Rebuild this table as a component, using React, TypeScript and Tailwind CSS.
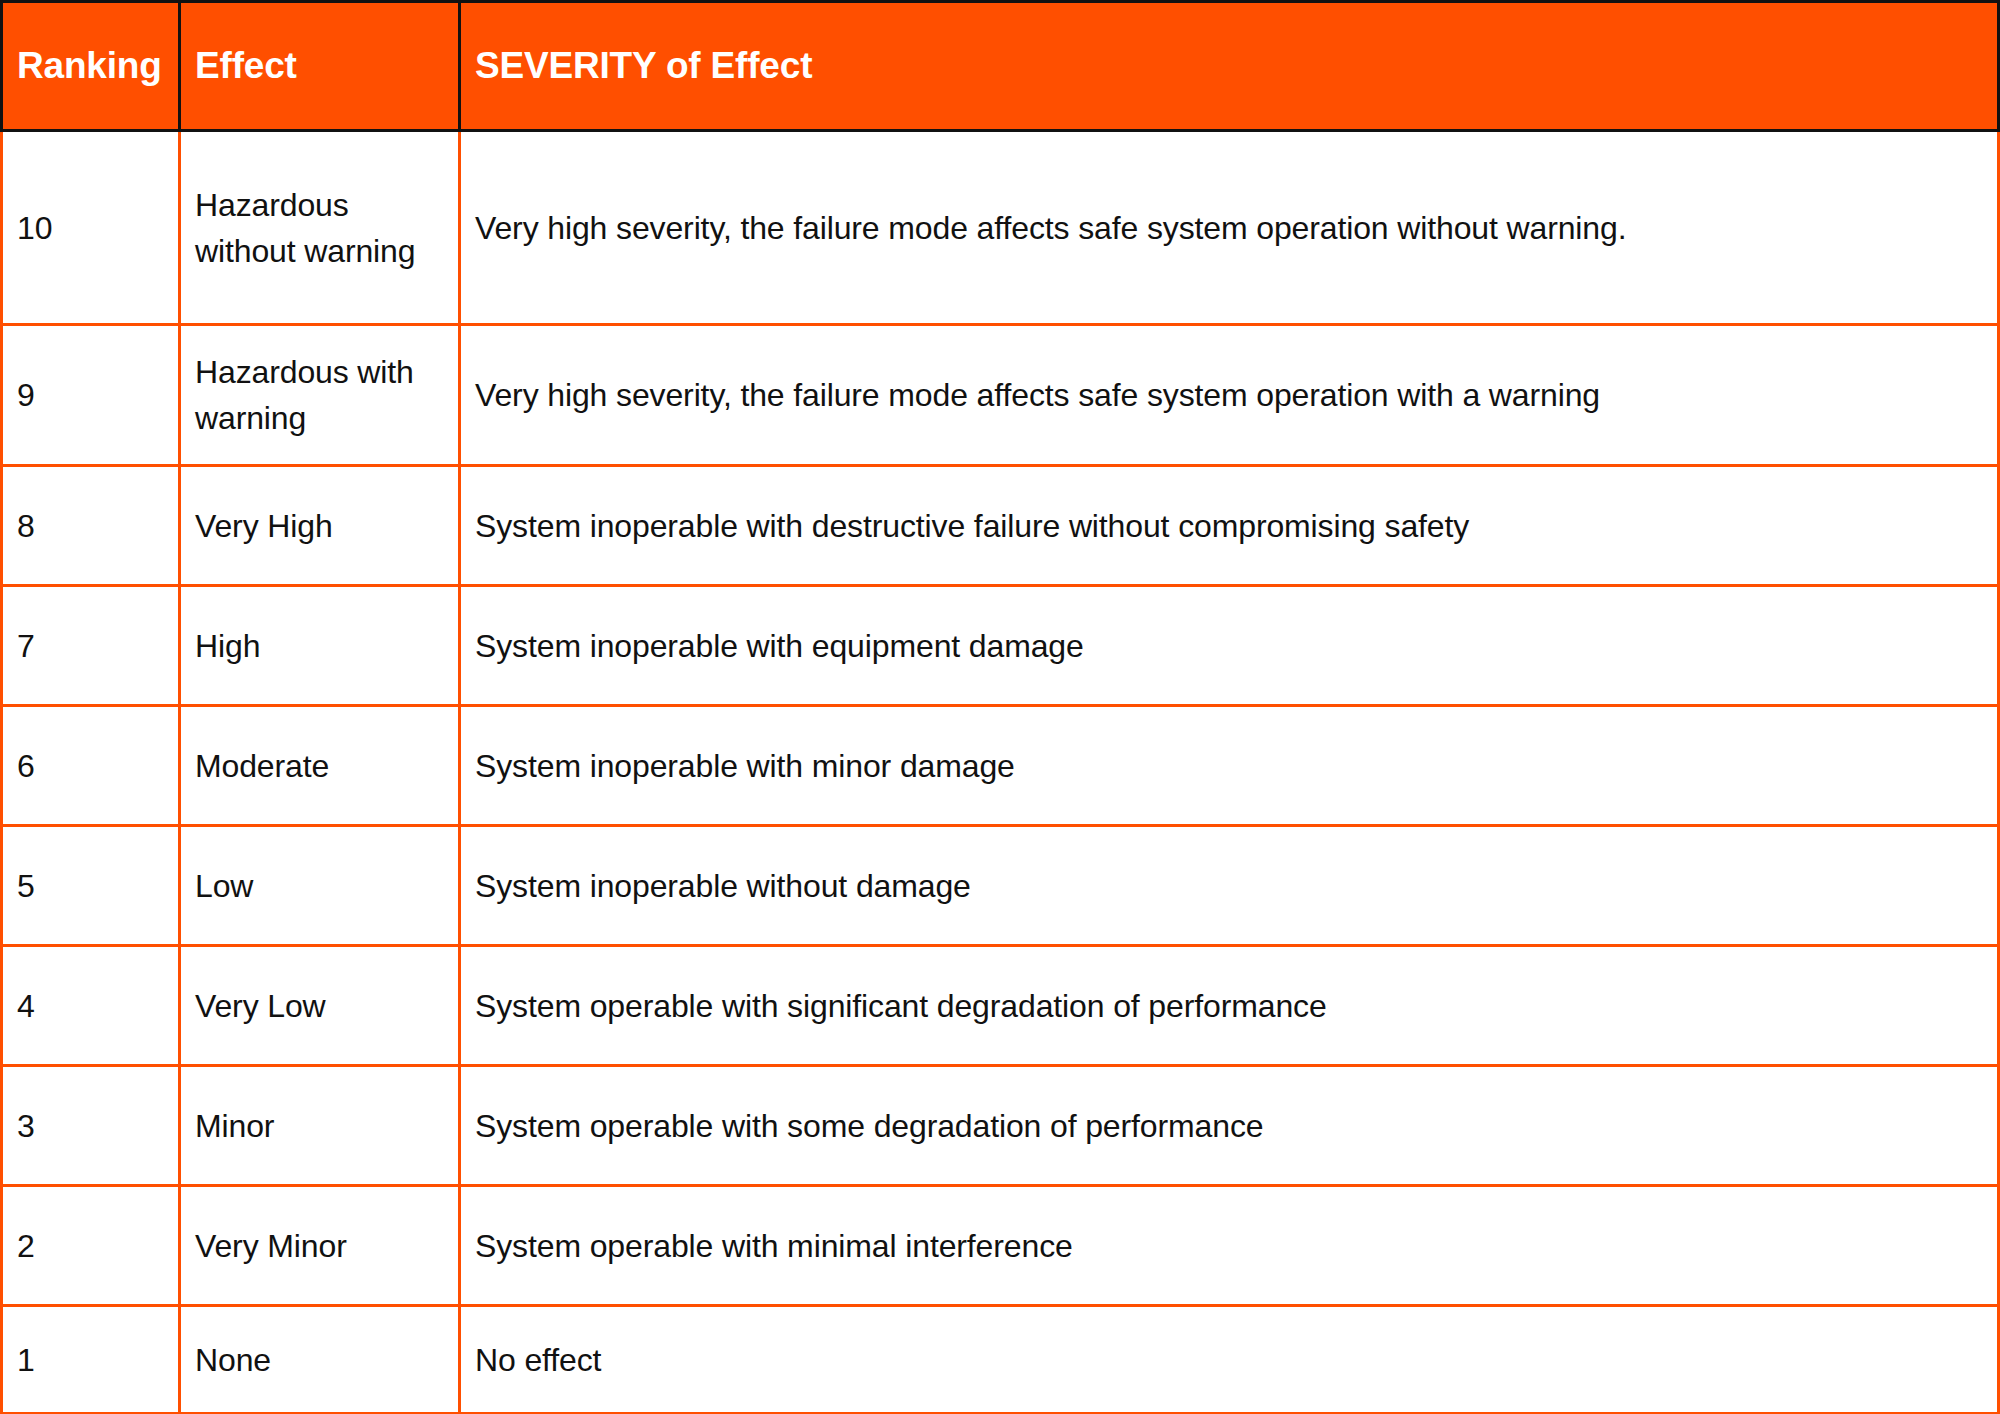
const ORANGE = "#ff4f00";

interface Row {
  rank: string;
  effect: string[];
  severity: string;
  h: string;
}

const rows: Row[] = [
  { rank: "10", effect: ["Hazardous", "without warning"], severity: "Very high severity, the failure mode affects safe system operation without warning.", h: "h-[194px]" },
  { rank: "9", effect: ["Hazardous with", "warning"], severity: "Very high severity, the failure mode affects safe system operation with a warning", h: "h-[141px]" },
  { rank: "8", effect: ["Very High"], severity: "System inoperable with destructive failure without compromising safety", h: "h-[120px]" },
  { rank: "7", effect: ["High"], severity: "System inoperable with equipment damage", h: "h-[120px]" },
  { rank: "6", effect: ["Moderate"], severity: "System inoperable with minor damage", h: "h-[120px]" },
  { rank: "5", effect: ["Low"], severity: "System inoperable without damage", h: "h-[120px]" },
  { rank: "4", effect: ["Very Low"], severity: "System operable with significant degradation of performance", h: "h-[120px]" },
  { rank: "3", effect: ["Minor"], severity: "System operable with some degradation of performance", h: "h-[120px]" },
  { rank: "2", effect: ["Very Minor"], severity: "System operable with minimal interference", h: "h-[120px]" },
  { rank: "1", effect: ["None"], severity: "No effect", h: "h-[108px]" },
];

// header: black rules, body: orange rules
const th = "border-[3px] border-[#111] pl-[14px] pr-[14px] text-left align-middle font-bold text-white text-[37px] tracking-[-0.005em]";
const td = "border-[3px] border-[#ff4f00] pl-[14px] pr-[14px] align-middle text-[32px] leading-[46px] tracking-[-0.004em] text-[#111]";

export default function App() {
  return (
    <div className="w-[2000px] bg-white font-['Liberation_Sans',Arial,sans-serif]">
      <table className="w-full border-collapse table-fixed">
        <colgroup>
          <col className="w-[178px]" />
          <col className="w-[280px]" />
          <col />
        </colgroup>
        <thead>
          <tr className="h-[129px]" style={{ background: ORANGE }}>
            <th className={th}>Ranking</th>
            <th className={th}>Effect</th>
            <th className={th}>SEVERITY of Effect</th>
          </tr>
        </thead>
        <tbody>
          {rows.map((r) => (
            <tr key={r.rank} className={r.h}>
              <td className={td}>{r.rank}</td>
              <td className={td}>
                {r.effect.map((line, i) => (
                  <div key={i} className="whitespace-nowrap">{line}</div>
                ))}
              </td>
              <td className={td}>{r.severity}</td>
            </tr>
          ))}
        </tbody>
      </table>
    </div>
  );
}
